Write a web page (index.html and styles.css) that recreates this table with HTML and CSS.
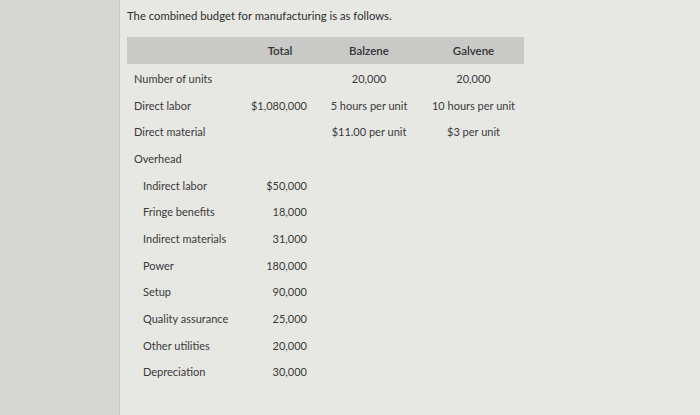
FILE: index.html
```html
<!DOCTYPE html>
<html>
<head>
<meta charset="utf-8">
<link rel="stylesheet" href="styles.css">
</head>
<body>
<div class="page">
  <div class="sidebar"></div>
  <div class="main">
    <p class="intro">The combined budget for manufacturing is as follows.</p>
    <table class="budget">
      <colgroup>
        <col class="w-label"><col class="w-total"><col class="w-balz"><col class="w-galv">
      </colgroup>
      <thead>
        <tr><th></th><th class="h-total">Total</th><th>Balzene</th><th>Galvene</th></tr>
      </thead>
      <tbody>
        <tr><td class="lbl">Number of units</td><td class="num"></td><td class="prod">20,000</td><td class="prod">20,000</td></tr>
        <tr><td class="lbl">Direct labor</td><td class="num">$1,080,000</td><td class="prod">5 hours per unit</td><td class="prod">10 hours per unit</td></tr>
        <tr><td class="lbl">Direct material</td><td class="num"></td><td class="prod">$11.00 per unit</td><td class="prod">$3 per unit</td></tr>
        <tr><td class="lbl">Overhead</td><td class="num"></td><td></td><td></td></tr>
        <tr><td class="lbl sub">Indirect labor</td><td class="num">$50,000</td><td></td><td></td></tr>
        <tr><td class="lbl sub">Fringe benefits</td><td class="num">18,000</td><td></td><td></td></tr>
        <tr><td class="lbl sub">Indirect materials</td><td class="num">31,000</td><td></td><td></td></tr>
        <tr><td class="lbl sub">Power</td><td class="num">180,000</td><td></td><td></td></tr>
        <tr><td class="lbl sub">Setup</td><td class="num">90,000</td><td></td><td></td></tr>
        <tr><td class="lbl sub">Quality assurance</td><td class="num">25,000</td><td></td><td></td></tr>
        <tr><td class="lbl sub">Other utilities</td><td class="num">20,000</td><td></td><td></td></tr>
        <tr><td class="lbl sub">Depreciation</td><td class="num">30,000</td><td></td><td></td></tr>
      </tbody>
    </table>
  </div>
</div>
</body>
</html>
```
FILE: styles.css
```css
html, body {
  margin: 0;
  padding: 0;
  height: 100%;
}
body {
  font-family: Lato, "Open Sans", sans-serif;
  color: #3a3a3a;
  background: #e6e6e3;
}
.page {
  display: flex;
  height: 415px;
}
.sidebar {
  width: 119px;
  background: #d6d6d4;
  border-right: 1px solid #c9c9c7;
}
.main {
  flex: 1;
  padding: 9px 0 0 7px;
  background: #e7e7e4;
}
.intro {
  margin: 0;
  font-size: 11.3px;
  line-height: 14px;
  color: #2e2e2e;
}
.budget {
  margin-top: 14px;
  border-collapse: collapse;
  table-layout: fixed;
  width: 397px;
  font-size: 11px;
}
.w-label { width: 118px; }
.w-total { width: 70px; }
.w-balz { width: 108px; }
.w-galv { width: 101px; }
.budget th {
  background: #c9c9c7;
  height: 27px;
  padding: 0;
  font-weight: 600;
  color: #333;
  font-size: 11.5px;
  text-align: center;
}
.budget td {
  height: 26.7px;
  padding: 0;
  vertical-align: middle;
  white-space: nowrap;
}
.budget tbody tr:first-child td {
  padding-top: 1px;
}
.lbl {
  text-align: left;
  padding-left: 7px !important;
}
.lbl.sub {
  padding-left: 16px !important;
}
.num {
  text-align: right;
  padding-right: 8px !important;
}
.prod {
  text-align: center;
}
```
